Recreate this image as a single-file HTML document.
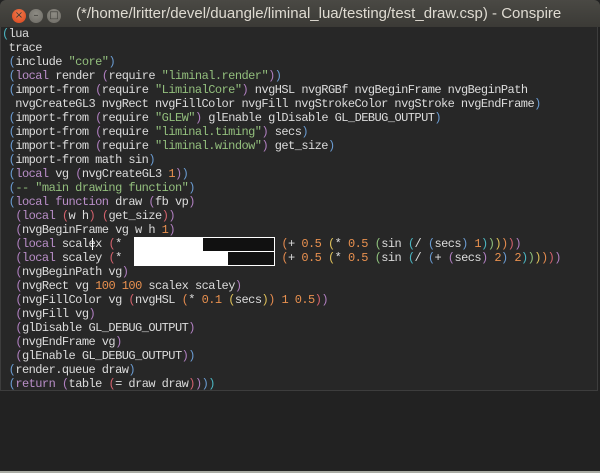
<!DOCTYPE html>
<html><head><meta charset="utf-8"><style>
*{margin:0;padding:0;box-sizing:border-box}
body{width:600px;height:473px;background:#222;overflow:hidden;position:relative;font-family:"DejaVu Sans Mono","Liberation Mono",monospace}
#tb{position:absolute;left:0;top:0;width:600px;height:27px;background:linear-gradient(#4a4944,#3b3a36);border-radius:6px 6px 0 0}
.btn{position:absolute;top:9px;width:14px;height:14px;border-radius:50%;font:10px "DejaVu Sans",sans-serif;color:#3a3935;text-align:center;line-height:14px}
#title{position:absolute;left:76px;top:5px;font:15px "Liberation Sans","DejaVu Sans",sans-serif;color:#dfdbd2;white-space:nowrap}
#ed{position:absolute;left:0;top:27px;width:598px;height:364px;background:#272727;border:1px solid #3d3d3d;border-top:none}
#code{position:absolute;left:2px;top:27px;font-family:"Liberation Mono",monospace;font-size:12px;letter-spacing:-0.55px;line-height:14px;color:#dcdcdc;white-space:pre}
.p0{color:#4bb5c1}.p1{color:#6a9bd1}.p2{color:#b07fc0}.p3{color:#d4626d}.p4{color:#e38a4e}.p5{color:#dfc15a}.p6{color:#8ec07c}
.k{color:#b98ec8}.s{color:#93bf7d}.n{color:#e8904f}
#bot{position:absolute;left:0;top:471px;width:600px;height:2px;background:#a9aba3}
.red{position:absolute;background:#fff;border:1px solid #fff}
.red i{position:absolute;top:0;bottom:0;right:0;background:#111}
</style></head><body>
<div id="tb">
<div class="btn" style="left:12px;background:radial-gradient(circle at 50% 35%,#f07a4d,#d9441b)">×</div>
<div class="btn" style="left:29px;background:radial-gradient(circle at 50% 35%,#8e8c84,#6b6963)">–</div>
<div class="btn" style="left:47px;background:radial-gradient(circle at 50% 35%,#8e8c84,#6b6963)">□</div>
<div id="title">(*/home/lritter/devel/duangle/liminal_lua/testing/test_draw.csp) - Conspire</div>
</div>
<div id="ed"></div>
<div id="code"><span class="p0">(</span>lua
 trace
 <span class="p1">(</span>include <span class="s">"core"</span><span class="p1">)</span>
 <span class="p1">(</span><span class="k">local</span> render <span class="p2">(</span>require <span class="s">"liminal.render"</span><span class="p2">)</span><span class="p1">)</span>
 <span class="p1">(</span>import-from <span class="p2">(</span>require <span class="s">"LiminalCore"</span><span class="p2">)</span> nvgHSL nvgRGBf nvgBeginFrame nvgBeginPath
  nvgCreateGL3 nvgRect nvgFillColor nvgFill nvgStrokeColor nvgStroke nvgEndFrame<span class="p1">)</span>
 <span class="p1">(</span>import-from <span class="p2">(</span>require <span class="s">"GLEW"</span><span class="p2">)</span> glEnable glDisable GL_DEBUG_OUTPUT<span class="p1">)</span>
 <span class="p1">(</span>import-from <span class="p2">(</span>require <span class="s">"liminal.timing"</span><span class="p2">)</span> secs<span class="p1">)</span>
 <span class="p1">(</span>import-from <span class="p2">(</span>require <span class="s">"liminal.window"</span><span class="p2">)</span> get_size<span class="p1">)</span>
 <span class="p1">(</span>import-from math sin<span class="p1">)</span>
 <span class="p1">(</span><span class="k">local</span> vg <span class="p2">(</span>nvgCreateGL3 <span class="n">1</span><span class="p2">)</span><span class="p1">)</span>
 <span class="p1">(</span><span class="s">-- "main drawing function"</span><span class="p1">)</span>
 <span class="p1">(</span><span class="k">local</span> <span class="k">function</span> draw <span class="p2">(</span>fb vp<span class="p2">)</span>
  <span class="p2">(</span><span class="k">local</span> <span class="p3">(</span>w h<span class="p3">)</span> <span class="p3">(</span>get_size<span class="p3">)</span><span class="p2">)</span>
  <span class="p2">(</span>nvgBeginFrame vg w h <span class="n">1</span><span class="p2">)</span>
  <span class="p2">(</span><span class="k">local</span> scalex <span class="p3">(</span>*                        <span class="p4">(</span>+ <span class="n">0.5</span> <span class="p5">(</span>* <span class="n">0.5</span> <span class="p6">(</span>sin <span class="p0">(</span>/ <span class="p1">(</span>secs<span class="p1">)</span> <span class="n">1</span><span class="p0">)</span><span class="p6">)</span><span class="p5">)</span><span class="p4">)</span><span class="p3">)</span><span class="p2">)</span>
  <span class="p2">(</span><span class="k">local</span> scaley <span class="p3">(</span>*                        <span class="p4">(</span>+ <span class="n">0.5</span> <span class="p5">(</span>* <span class="n">0.5</span> <span class="p6">(</span>sin <span class="p0">(</span>/ <span class="p1">(</span>+ <span class="p2">(</span>secs<span class="p2">)</span> <span class="n">2</span><span class="p1">)</span> <span class="n">2</span><span class="p0">)</span><span class="p6">)</span><span class="p5">)</span><span class="p4">)</span><span class="p3">)</span><span class="p2">)</span>
  <span class="p2">(</span>nvgBeginPath vg<span class="p2">)</span>
  <span class="p2">(</span>nvgRect vg <span class="n">100</span> <span class="n">100</span> scalex scaley<span class="p2">)</span>
  <span class="p2">(</span>nvgFillColor vg <span class="p3">(</span>nvgHSL <span class="p4">(</span>* <span class="n">0.1</span> <span class="p5">(</span>secs<span class="p5">)</span><span class="p4">)</span> <span class="n">1</span> <span class="n">0.5</span><span class="p3">)</span><span class="p2">)</span>
  <span class="p2">(</span>nvgFill vg<span class="p2">)</span>
  <span class="p2">(</span>glDisable GL_DEBUG_OUTPUT<span class="p2">)</span>
  <span class="p2">(</span>nvgEndFrame vg<span class="p2">)</span>
  <span class="p2">(</span>glEnable GL_DEBUG_OUTPUT<span class="p2">)</span><span class="p1">)</span>
 <span class="p1">(</span>render.queue draw<span class="p1">)</span>
 <span class="p1">(</span><span class="k">return</span> <span class="p2">(</span>table <span class="p3">(</span>= draw draw<span class="p3">)</span><span class="p2">)</span><span class="p1">)</span><span class="p0">)</span></div>
<div class="red" style="left:134px;top:237px;width:141px;height:15px"><i style="left:68px"></i></div>
<div class="red" style="left:134px;top:251px;width:141px;height:15px"><i style="left:93px"></i></div>
<div style="position:absolute;left:92px;top:238px;width:1px;height:12px;background:#fff"></div>
<div id="bot"></div>
</body></html>
